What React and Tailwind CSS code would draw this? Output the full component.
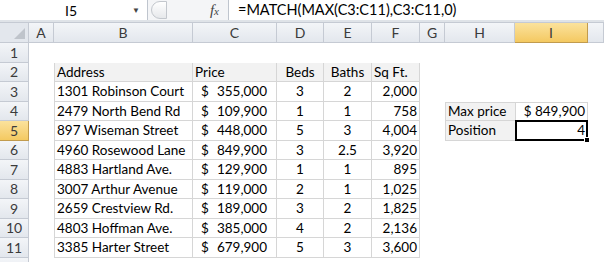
import React from 'react';

const cols = ['A', 'B', 'C', 'D', 'E', 'F', 'G', 'H', 'I', ''];

const homes = [
  ['1301 Robinson Court', '355,000', '3', '2', '2,000'],
  ['2479 North Bend Rd', '109,900', '1', '1', '758'],
  ['897 Wiseman Street', '448,000', '5', '3', '4,004'],
  ['4960 Rosewood Lane', '849,900', '3', '2.5', '3,920'],
  ['4883 Hartland Ave.', '129,900', '1', '1', '895'],
  ['3007 Arthur Avenue', '119,000', '2', '1', '1,025'],
  ['2659 Crestview Rd.', '189,000', '3', '2', '1,825'],
  ['4803 Hoffman Ave.', '385,000', '4', '2', '2,136'],
  ['3385 Harter Street', '679,900', '5', '3', '3,600'],
];

const hdr = 'flex items-center justify-center border-r border-b border-[#c5cad3] bg-gradient-to-b from-[#f3f5f8] to-[#e3e7ed] text-[#3b3b3b] text-[14px]';
const hdrOn = 'flex items-center justify-center border-r border-b border-[#c19b4e] bg-gradient-to-b from-[#fbe29c] to-[#f4c960] text-[#3b3b3b] text-[14px]';
const tb = 'border-r border-b border-[#d6d6d6]';

const RowHead = ({ n }) => (
  <div className={n === 5 ? hdrOn : hdr}>{n}</div>
);

const App = () => {
  return (
    <div className="w-[604px] h-[262px] overflow-hidden bg-white text-[13.5px] text-black" style={{ fontFamily: 'Lato, "Open Sans", sans-serif' }}>
      {/* Formula bar */}
      <div className="flex h-[23px] bg-[#dfe3e8] border-b border-[#c5cad3]">
        <div className="flex items-center w-[148px] h-[20px] bg-white border-r border-[#bfc5ce] text-[14px]">
          <span className="flex-1 text-center pl-[10px]">I5</span>
          <span className="w-[12px] mr-[3px] text-[8px] text-[#444]">▼</span>
        </div>
        <div className="flex items-center w-[80px] h-[20px] bg-[#f4f5f7]">
          <div className="ml-[3px] w-[16px] h-[18px] rounded-l-full border border-[#c3c7cd] bg-gradient-to-b from-white to-[#e6e8eb]" />
          <span className="ml-auto mr-[9px] italic text-[15px] text-[#444]" style={{ fontFamily: '"Liberation Serif", serif' }}>f<span className="text-[11px]">x</span></span>
        </div>
        <div className="flex-1 flex items-center h-[20px] bg-white border-l border-[#bfc5ce] pl-[9px] text-[14.5px]">
          =MATCH(MAX(C3:C11),C3:C11,0)
        </div>
      </div>

      {/* Sheet */}
      <div className="grid grid-cols-[29px_25px_139px_84px_47px_48px_48px_25px_70px_73px_1fr] grid-rows-[20px_repeat(12,19.5px)]">
        <div className="relative border-r border-b border-[#c5cad3] bg-[#e3e7ed]">
          <div className="absolute right-[3px] bottom-[3px] w-0 h-0 border-l-[11px] border-l-transparent border-b-[11px] border-b-[#bfc4cb]" />
        </div>
        {cols.map((c, i) => (
          <div key={i} className={c === 'I' ? hdrOn : hdr}>{c}</div>
        ))}

        {/* Row 1 */}
        <RowHead n={1} />
        <div className="col-span-10" />

        {/* Row 2 */}
        <RowHead n={2} />
        <div />
        <div className={`${tb} border-l bg-[#f2f2f2] pl-[2px] flex items-center`}>Address</div>
        <div className={`${tb} bg-[#f2f2f2] pl-[2px] flex items-center`}>Price</div>
        <div className={`${tb} bg-[#f2f2f2] flex items-center justify-center`}>Beds</div>
        <div className={`${tb} bg-[#f2f2f2] flex items-center justify-center`}>Baths</div>
        <div className={`${tb} bg-[#f2f2f2] pl-[2px] flex items-center`}>Sq Ft.</div>
        <div className="col-span-4" />

        {homes.map((h, i) => {
          const n = i + 3;
          return (
            <React.Fragment key={n}>
              <RowHead n={n} />
              <div />
              <div className={`${tb} border-l pl-[2px] flex items-center whitespace-nowrap`}>{h[0]}</div>
              <div className={`${tb} flex items-center justify-between pl-[8px] pr-[9px]`}>
                <span>$</span>
                <span>{h[1]}</span>
              </div>
              <div className={`${tb} flex items-center justify-center`}>{h[2]}</div>
              <div className={`${tb} flex items-center justify-center`}>{h[3]}</div>
              <div className={`${tb} flex items-center justify-end pr-[2px]`}>{h[4]}</div>
              <div />
              {n === 4 && (
                <>
                  <div className="border border-[#d6d6d6] border-r-0 bg-[#f2f2f2] pl-[2px] flex items-center">Max price</div>
                  <div className="border border-[#d6d6d6] flex items-center justify-end pr-[2px]">$ 849,900</div>
                  <div />
                </>
              )}
              {n === 5 && (
                <>
                  <div className="border-l border-b border-[#d6d6d6] bg-[#f2f2f2] pl-[2px] flex items-center">Position</div>
                  <div className="relative border-2 border-black -mt-px flex items-center justify-end pr-[1px]">
                    4
                    <div className="absolute -right-[4px] -bottom-[4px] w-[6px] h-[6px] bg-black border border-white" />
                  </div>
                  <div />
                </>
              )}
              {n !== 4 && n !== 5 && <div className="col-span-3" />}
            </React.Fragment>
          );
        })}

        <div className={hdr} />
        <div className="col-span-10" />
      </div>
    </div>
  );
};

export default App;
